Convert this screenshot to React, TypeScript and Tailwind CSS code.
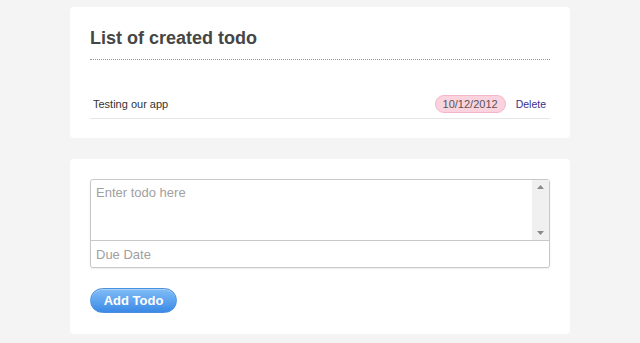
import React, { useState } from "react";

type Todo = { id: number; text: string; due: string };

// 待办列表页面
export default function App() {
  const [todos, setTodos] = useState<Todo[]>([
    { id: 1, text: "Testing our app", due: "10/12/2012" },
  ]);
  const [text, setText] = useState("");
  const [due, setDue] = useState("");

  const addTodo = () => {
    if (!text.trim()) return;
    setTodos([...todos, { id: Date.now(), text, due }]);
    setText("");
    setDue("");
  };

  const removeTodo = (id: number) => {
    setTodos(todos.filter((t) => t.id !== id));
  };

  return (
    <div
      className="min-h-[343px] bg-[#f4f4f4] pt-[7px] pb-[10px]"
      style={{ fontFamily: '"Liberation Sans", Arial, sans-serif' }}
    >
      <div className="mx-auto w-[500px] flex flex-col gap-[21px]">
        {/* 列表卡片 */}
        <div className="bg-white rounded-[4px] px-5 pt-[19px] pb-[19px]">
          <h1 className="text-[18px] leading-[24px] font-bold text-[#464646] pb-[9px] border-b border-dotted border-[#999]">
            List of created todo
          </h1>
          <ul className="mt-[30px]">
            {todos.map((todo) => (
              <li
                key={todo.id}
                className="flex items-center py-[5px] pl-[3px] pr-[4px] border-b border-[#e6e6e6] text-[11px] leading-[13px]"
              >
                <span className="flex-1 text-[#333]">{todo.text}</span>
                <span className="h-[18px] px-[7px] flex items-center rounded-full bg-[#fbd3de] border border-[#f3b6c8] text-[#555]">
                  {todo.due}
                </span>
                <button
                  onClick={() => removeTodo(todo.id)}
                  className="ml-[10px] text-[10.5px] text-[#3b2e8c]"
                >
                  Delete
                </button>
              </li>
            ))}
          </ul>
        </div>

        {/* 新增卡片 */}
        <div className="bg-white rounded-[4px] px-5 pt-5 pb-[21px]">
          <div className="rounded-[3px] border border-[#c8c8c8] shadow-[0_1px_2px_rgba(0,0,0,0.08)]">
            <div className="flex h-[61px] border-b border-[#c8c8c8]">
              <textarea
                value={text}
                onChange={(e) => setText(e.target.value)}
                placeholder="Enter todo here"
                className="flex-1 resize-none overflow-hidden px-[5px] pt-[4px] text-[13px] leading-[18px] text-[#333] placeholder:text-[#a0a0a0] outline-none"
              />
              <div className="w-[17px] bg-[#f0f0f0] flex flex-col items-center justify-between py-[5px]">
                <svg width="7" height="4" viewBox="0 0 7 4">
                  <path d="M0 4 L3.5 0 L7 4 Z" fill="#8a8a8a" />
                </svg>
                <svg width="7" height="4" viewBox="0 0 7 4">
                  <path d="M0 0 L3.5 4 L7 0 Z" fill="#8a8a8a" />
                </svg>
              </div>
            </div>
            <input
              value={due}
              onChange={(e) => setDue(e.target.value)}
              placeholder="Due Date"
              className="block w-full h-[26px] px-[5px] text-[13px] text-[#333] placeholder:text-[#a0a0a0] outline-none rounded-b-[3px]"
            />
          </div>
          <button
            onClick={addTodo}
            className="mt-[20px] h-[25px] w-[87px] rounded-full border border-[#4a8fe0] bg-gradient-to-b from-[#80bdf6] to-[#3b8ae6] text-white text-[13px] font-bold shadow-[inset_0_1px_0_rgba(255,255,255,0.35)]"
          >
            Add Todo
          </button>
        </div>
      </div>
    </div>
  );
}
